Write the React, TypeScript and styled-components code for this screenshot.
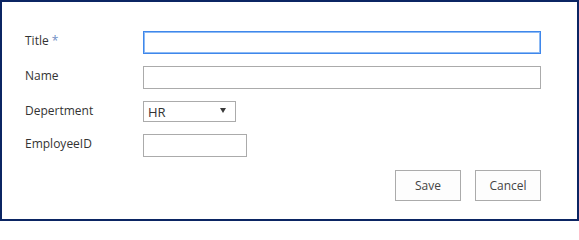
import React from "react";
import styled, { createGlobalStyle } from "styled-components";

const GlobalStyle = createGlobalStyle`
  html, body {
    margin: 0;
    padding: 0;
    background: #ffffff;
  }
  * {
    box-sizing: border-box;
  }
`;

const Dialog = styled.div`
  width: 579px;
  height: 221px;
  border: 2px solid #0b2563;
  background: #ffffff;
  padding: 29px 36px 0 23px;
  font-family: "Open Sans", "Noto Sans", sans-serif;
  font-size: 12px;
  color: #333333;
`;

const Form = styled.div`
  display: grid;
  grid-template-columns: 118px 1fr;
  row-gap: 12px;
  align-items: start;
`;

const Label = styled.label`
  line-height: 18px;
  white-space: nowrap;
  padding-top: 1px;
`;

const Required = styled.span`
  color: #6f8dc4;
`;

const TextInput = styled.input<{ $width?: number; $focused?: boolean }>`
  display: block;
  width: ${(p) => (p.$width ? `${p.$width}px` : "100%")};
  height: 23px;
  margin: 0;
  padding: 0 4px;
  border: 1px solid ${(p) => (p.$focused ? "#3f87eb" : "#ababab")};
  box-shadow: ${(p) => (p.$focused ? "inset 0 0 0 1px #8dbaf4" : "none")};
  background: #ffffff;
  font: inherit;
  outline: none;
`;

const SelectBox = styled.div`
  width: 93px;
  height: 21px;
  border: 1px solid #ababab;
  display: flex;
  align-items: center;
  justify-content: space-between;
  padding: 0 9px 0 4px;
  font-size: 13px;
  color: #333333;
`;

const Arrow = styled.span`
  width: 0;
  height: 0;
  border-left: 3px solid transparent;
  border-right: 3px solid transparent;
  border-top: 5px solid #3a3a3a;
  margin-top: -2px;
`;

const Actions = styled.div`
  display: flex;
  justify-content: flex-end;
  gap: 14px;
  margin-top: 13px;
`;

const Button = styled.button`
  width: 66px;
  height: 31px;
  margin: 0;
  padding: 0;
  border: 1px solid #ababab;
  background: #fdfdfd;
  font-family: "Open Sans", "Noto Sans", sans-serif;
  font-size: 12px;
  color: #444444;
`;

const App: React.FC = () => {
  return (
    <>
      <GlobalStyle />
      <Dialog>
        <Form>
          <Label>
            Title <Required>*</Required>
          </Label>
          <TextInput $focused />
          <Label>Name</Label>
          <TextInput />
          <Label>Depertment</Label>
          <SelectBox>
            <span>HR</span>
            <Arrow />
          </SelectBox>
          <Label>EmployeeID</Label>
          <TextInput $width={104} />
        </Form>
        <Actions>
          <Button>Save</Button>
          <Button>Cancel</Button>
        </Actions>
      </Dialog>
    </>
  );
};

export default App;
